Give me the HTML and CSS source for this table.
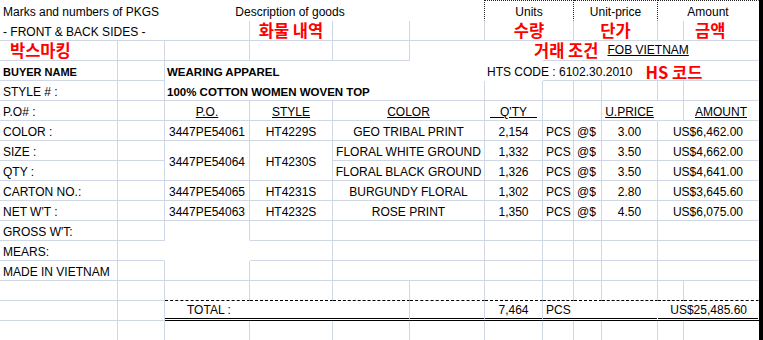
FILE: index.html
```html
<!DOCTYPE html>
<html lang="en">
<head>
<meta charset="utf-8">
<title>Invoice sheet</title>
<link rel="stylesheet" href="styles.css">
</head>
<body>
<div class="sheet">
  <!-- row 1 -->
  <div class="c s2 nr nb t">Marks and numbers of PKGS</div>
  <div class="c s3 nr nb ctr desc">Description of goods</div>
  <div class="c nb dr"></div>
  <div class="c s2 nb dt dr ctr">Units</div>
  <div class="c s2 nb dt dr ctr">Unit-price</div>
  <div class="c s2 nb dt nr ctr">Amount</div>

  <!-- row 2 -->
  <div class="c s3 t">- FRONT &amp; BACK SIDES -</div>
  <div class="c ctr kc"><span class="kr">화물 내역</span></div>
  <div class="c"></div>
  <div class="c"></div>
  <div class="c s2 ctr kc"><span class="kr">수량</span></div>
  <div class="c s2 ctr kc"><span class="kr">단가</span></div>
  <div class="c"></div>
  <div class="c nr kc amtkr"><span class="kr">금액</span></div>

  <!-- row 3 -->
  <div class="c kc mk"><span class="kr">박스마킹</span></div>
  <div class="c"></div>
  <div class="c"></div>
  <div class="c"></div>
  <div class="c"></div>
  <div class="c s2 nr nb kc trade"><span class="kr">거래 조건</span><span class="u fob">FOB VIETNAM</span></div>
  <div class="c s5 nr"></div>

  <!-- row 4 -->
  <div class="c t b">BUYER NAME</div>
  <div class="c"></div>
  <div class="c s4 nr nb t2 b bl">WEARING APPAREL</div>
  <div class="c nr nb hts"><span>HTS CODE : 6102.30.2010</span><span class="kr hs">HS 코드</span></div>
  <div class="c s5 nr"></div>

  <!-- row 5 -->
  <div class="c t">STYLE # :</div>
  <div class="c"></div>
  <div class="c s4 t2 b bl">100% COTTON WOMEN WOVEN TOP</div>
  <div class="c"></div>
  <div class="c"></div>
  <div class="c"></div>
  <div class="c"></div>
  <div class="c"></div>
  <div class="c nr"></div>

  <!-- row 6 -->
  <div class="c t">P.O# :</div>
  <div class="c"></div>
  <div class="c ctr"><span class="u">P.O.</span></div>
  <div class="c ctr"><span class="u">STYLE</span></div>
  <div class="c s2 ctr"><span class="u">COLOR</span></div>
  <div class="c ctr"><span class="u">&nbsp;&nbsp;&nbsp;Q'TY&nbsp;&nbsp;&nbsp;</span></div>
  <div class="c"></div>
  <div class="c"></div>
  <div class="c nr ctr"><span class="u">U.PRICE</span></div>
  <div class="c"></div>
  <div class="c nr ctr"><span class="u">AMOUNT</span></div>

  <!-- row 7 -->
  <div class="c t">COLOR :</div>
  <div class="c"></div>
  <div class="c ctr">3447PE54061</div>
  <div class="c ctr">HT4229S</div>
  <div class="c s2 ctr">GEO TRIBAL PRINT</div>
  <div class="c ctr">2,154</div>
  <div class="c t">PCS</div>
  <div class="c t">@$</div>
  <div class="c ctr">3.00</div>
  <div class="c s2 nr rt">US$6,462.00</div>

  <!-- row 8 -->
  <div class="c t">SIZE :</div>
  <div class="c"></div>
  <div class="c r2 ctr mid">3447PE54064</div>
  <div class="c r2 ctr mid">HT4230S</div>
  <div class="c s2 ctr">FLORAL WHITE GROUND</div>
  <div class="c ctr">1,332</div>
  <div class="c t">PCS</div>
  <div class="c t">@$</div>
  <div class="c ctr">3.50</div>
  <div class="c s2 nr rt">US$4,662.00</div>

  <!-- row 9 -->
  <div class="c t">QTY :</div>
  <div class="c"></div>
  <div class="c s2 ctr">FLORAL BLACK GROUND</div>
  <div class="c ctr">1,326</div>
  <div class="c t">PCS</div>
  <div class="c t">@$</div>
  <div class="c ctr">3.50</div>
  <div class="c s2 nr rt">US$4,641.00</div>

  <!-- row 10 -->
  <div class="c t">CARTON NO.:</div>
  <div class="c"></div>
  <div class="c ctr">3447PE54065</div>
  <div class="c ctr">HT4231S</div>
  <div class="c s2 ctr">BURGUNDY FLORAL</div>
  <div class="c ctr">1,302</div>
  <div class="c t">PCS</div>
  <div class="c t">@$</div>
  <div class="c ctr">2.80</div>
  <div class="c s2 nr rt">US$3,645.60</div>

  <!-- row 11 -->
  <div class="c t">NET W'T :</div>
  <div class="c"></div>
  <div class="c ctr">3447PE54063</div>
  <div class="c ctr">HT4232S</div>
  <div class="c s2 ctr">ROSE PRINT</div>
  <div class="c ctr">1,350</div>
  <div class="c t">PCS</div>
  <div class="c t">@$</div>
  <div class="c ctr">4.50</div>
  <div class="c s2 nr rt">US$6,075.00</div>

  <!-- row 12 -->
  <div class="c t">GROSS W'T:</div>
  <div class="c"></div>
  <div class="c nb"></div>
  <div class="c"></div>
  <div class="c s2"></div>
  <div class="c"></div>
  <div class="c"></div>
  <div class="c"></div>
  <div class="c"></div>
  <div class="c s2 nr"></div>

  <!-- row 13 -->
  <div class="c t">MEARS:</div>
  <div class="c nr"></div>
  <div class="c nr nb"></div>
  <div class="c"></div>
  <div class="c s2"></div>
  <div class="c"></div>
  <div class="c"></div>
  <div class="c"></div>
  <div class="c"></div>
  <div class="c s2 nr"></div>

  <!-- row 14 -->
  <div class="c t">MADE IN VIETNAM</div>
  <div class="c"></div>
  <div class="c"></div>
  <div class="c"></div>
  <div class="c s2"></div>
  <div class="c"></div>
  <div class="c"></div>
  <div class="c"></div>
  <div class="c"></div>
  <div class="c s2 nr"></div>

  <!-- row 15 -->
  <div class="c"></div>
  <div class="c"></div>
  <div class="c dash"></div>
  <div class="c dash"></div>
  <div class="c dash"></div>
  <div class="c dash"></div>
  <div class="c dash"></div>
  <div class="c dash"></div>
  <div class="c dash"></div>
  <div class="c dash"></div>
  <div class="c dash"></div>
  <div class="c nr dash"></div>

  <!-- row 16 -->
  <div class="c"></div>
  <div class="c"></div>
  <div class="c s3 dbl total">TOTAL :</div>
  <div class="c dbl"></div>
  <div class="c ctr dbl">7,464</div>
  <div class="c s3 nr t dbl">PCS</div>
  <div class="c s2 nr rt rt2 dbl">US$25,485.60</div>

  <!-- row 17 -->
  <div class="c"></div>
  <div class="c"></div>
  <div class="c"></div>
  <div class="c"></div>
  <div class="c"></div>
  <div class="c"></div>
  <div class="c"></div>
  <div class="c"></div>
  <div class="c"></div>
  <div class="c"></div>
  <div class="c"></div>
  <div class="c nr"></div>
</div>
</body>
</html>
```

FILE: styles.css
```css
html, body {
  margin: 0;
  padding: 0;
  background: #fff;
  overflow: hidden;
}

.sheet {
  box-sizing: border-box;
  width: 763px;
  height: 340px;
  overflow: hidden;
  border-right: 4px solid #000;
  display: grid;
  grid-template-columns: 118px 47px 85px 83px 77px 75px 58px 31px 28px 56px 26px 75px;
  grid-template-rows: 21px repeat(16, 20px);
  font-family: "Liberation Sans", Arial, sans-serif;
  font-size: 12px;
  color: #000;
}

.c {
  box-sizing: border-box;
  display: flex;
  align-items: flex-end;
  justify-content: flex-start;
  line-height: 14px;
  padding-bottom: 1px;
  white-space: nowrap;
  overflow: visible;
  min-width: 0;
  border-right: 1px solid #d0d7e5;
  border-bottom: 1px solid #d0d7e5;
}

.c > * { flex-shrink: 0; }

.nr { border-right-color: transparent; }
.nb { border-bottom-color: transparent; }

.dr { border-right: 1px dotted #222; }
.dt { border-top: 1px dotted #222; }

.dash { border-bottom: 1px dashed #000; }
.dbl { border-bottom: 3px double #000; }

.s2 { grid-column: span 2; }
.s3 { grid-column: span 3; }
.s4 { grid-column: span 4; }
.s5 { grid-column: span 5; }
.r2 { grid-row: span 2; }

.ctr { justify-content: center; }
.rt { justify-content: flex-end; padding-right: 15px; }
.rt2 { padding-right: 11px; }
.mid { align-items: center; padding-bottom: 0; padding-top: 2px; }

.desc { padding-left: 6px; }

.t { padding-left: 3px; }
.t2 { padding-left: 2px; }
.b { font-weight: 700; font-size: 11px; }
.bl { font-size: 11.5px; }
.u { text-decoration: underline; }

.kr {
  font-family: "Noto Sans CJK KR", "Liberation Sans", sans-serif;
  font-weight: 700;
  font-size: 16.5px;
  line-height: 16px;
  color: #f00;
}

.kc { padding-bottom: 2px; }
.mk { padding-left: 10px; }
.amtkr { padding-left: 11px; }

.trade { padding-left: 124px; }
.fob {
  margin-left: 9px;
  margin-bottom: 1px;
  font-size: 12px;
}

.hts { padding-left: 2px; }
.hs {
  margin-left: 13px;
  margin-bottom: -1px;
}

.total { padding-left: 22px; }
```
